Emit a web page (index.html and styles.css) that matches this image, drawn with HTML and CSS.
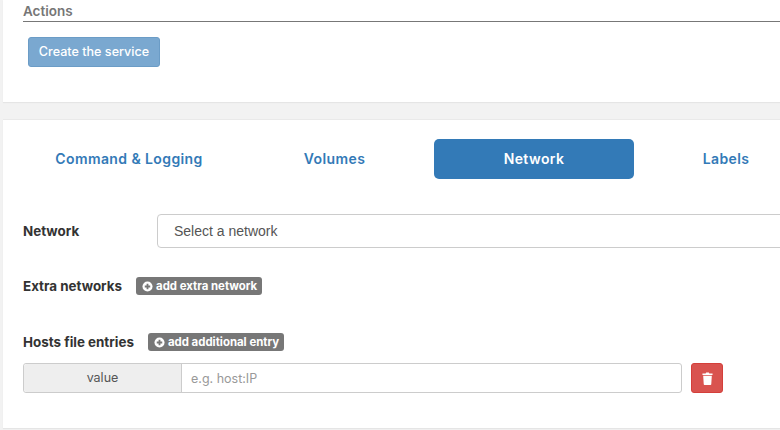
FILE: index.html
```html
<!DOCTYPE html>
<html lang="en">
    <head>
        <meta charset="UTF-8">
        <title>Create service</title>
        <link rel="stylesheet" href="styles.css">
    </head>
    <body>
        <div class="page">
            <section class="card card-actions">
                <h3 class="section-title">Actions</h3>
                <button class="btn-create" type="button" disabled>Create the service</button>
            </section>

            <section class="card card-tabs">
                <ul class="tabs">
                    <li class="tab tab-command"><a href="#">Command &amp; Logging</a></li>
                    <li class="tab tab-volumes"><a href="#">Volumes</a></li>
                    <li class="tab tab-network active"><a href="#">Network</a></li>
                    <li class="tab tab-labels"><a href="#">Labels</a></li>
                </ul>

                <div class="form-row row-network">
                    <label class="form-label" for="network">Network</label>
                    <div class="select-box" id="network">Select a network</div>
                </div>

                <div class="form-row row-extra">
                    <span class="form-label-inline">Extra networks</span>
                    <span class="badge">
                        <svg class="plus" viewBox="0 0 12 12"><circle cx="6" cy="6" r="5.5" fill="#fff"/><path d="M6 3v6M3 6h6" stroke="#777" stroke-width="2"/></svg>add extra network
                    </span>
                </div>

                <div class="form-row row-hosts">
                    <span class="form-label-inline">Hosts file entries</span>
                    <span class="badge">
                        <svg class="plus" viewBox="0 0 12 12"><circle cx="6" cy="6" r="5.5" fill="#fff"/><path d="M6 3v6M3 6h6" stroke="#777" stroke-width="2"/></svg>add additional entry
                    </span>
                </div>

                <div class="entry-row">
                    <div class="input-group">
                        <span class="addon">value</span>
                        <input class="entry-input" type="text" placeholder="e.g. host:IP">
                    </div>
                    <button class="btn-delete" type="button" aria-label="remove">
                        <svg viewBox="0 0 12 14" width="11" height="13"><path d="M4.5 0.5h3L8 1.5h3.500v1.700H.5V1.500H4zM1.300 4h9.400l-.6 9.200c0 .4-.4.8-.8.8H2.700c-.4 0-.8-.4-.8-.8z" fill="#fff"/></svg>
                    </button>
                </div>
            </section>
        </div>
    </body>
</html>
```

FILE: styles.css
```css
html, body {
    margin: 0;
    padding: 0;
    height: 430px;
    overflow: hidden;
    background-color: #f2f2f2;
    font-family: Inter, "Open Sans", sans-serif;
}

.page {
    width: 900px;
    padding-left: 3px;
    box-sizing: border-box;
}

.card {
    background-color: #fff;
    box-shadow: 0 1px 1px rgba(0, 0, 0, 0.05);
    padding-left: 20px;
    box-sizing: border-box;
}

.card-actions {
    height: 102px;
    padding-top: 2px;
}

.card-tabs {
    height: 309px;
    margin-top: 17px;
    padding-top: 19px;
    border-top: 1px solid #e9e9e9;
}

.section-title {
    margin: 0;
    height: 19px;
    line-height: 18px;
    font-size: 13.500px;
    font-weight: 600;
    color: #767676;
    border-bottom: 1px solid #777;
}

.btn-create {
    display: block;
    margin: 15px 0 0 5px;
    width: 132px;
    height: 30px;
    padding: 0 0 2px;
    font-family: inherit;
    font-size: 12.600px;
    font-weight: 500;
    color: #fff;
    background-color: #7aa8d0;
    border: 1px solid #6b9cc6;
    border-radius: 3px;
}

.tabs {
    display: flex;
    margin: 0;
    padding: 0;
    list-style: none;
}

.tab {
    height: 40px;
    line-height: 39px;
    text-align: center;
    font-size: 14px;
    font-weight: 600;
    letter-spacing: 0.4px;
    border-radius: 5px;
}

.tab a {
    color: #337ab7;
    text-decoration: none;
}

.tab-command { width: 212px; }
.tab-volumes { width: 199px; }
.tab-network { width: 200px; }
.tab-labels { width: 184px; }

.tab.active {
    background-color: #337ab7;
}

.tab.active a {
    color: #fff;
}

.form-row {
    display: flex;
    align-items: center;
}

.row-network {
    margin-top: 35px;
}

.form-label {
    width: 134px;
    font-size: 13.400px;
    font-weight: 700;
    color: #333;
}

.select-box {
    width: 700px;
    height: 34px;
    box-sizing: border-box;
    padding-left: 16px;
    line-height: 32px;
    font-family: "Liberation Sans", Arial, sans-serif;
    font-size: 14px;
    color: #555;
    border: 1px solid #ccc;
    border-radius: 4px;
}

.row-extra {
    margin-top: 29px;
    height: 18px;
}

.row-hosts {
    margin-top: 38px;
    height: 18px;
}

.form-label-inline {
    font-size: 13.400px;
    font-weight: 700;
    color: #333;
    margin-right: 14px;
}

.badge {
    display: inline-flex;
    align-items: center;
    height: 18px;
    padding: 0 5px 0 6px;
    font-size: 11.400px;
    font-weight: 700;
    color: #fff;
    background-color: #777;
    border-radius: 3px;
}

.plus {
    width: 11px;
    height: 11px;
    margin-right: 3px;
}

.entry-row {
    display: flex;
    align-items: center;
    margin-top: 12px;
}

.input-group {
    display: flex;
    width: 659px;
    height: 30px;
    box-sizing: border-box;
    border: 1px solid #ccc;
    border-radius: 3px;
}

.addon {
    width: 157px;
    flex: none;
    text-align: center;
    line-height: 28px;
    font-size: 12.500px;
    color: #555;
    background-color: #eee;
    border-right: 1px solid #ccc;
    border-radius: 3px 0 0 3px;
}

.entry-input {
    flex: 1;
    min-width: 0;
    border: none;
    padding: 0 9px;
    font-family: inherit;
    font-size: 12.500px;
    background: none;
}

.entry-input::placeholder {
    color: #999;
}

.btn-delete {
    display: flex;
    align-items: center;
    justify-content: center;
    width: 32px;
    height: 30px;
    margin-left: 9px;
    padding: 0;
    background-color: #d9534f;
    border: 1px solid #d43f3a;
    border-radius: 3px;
}
```
